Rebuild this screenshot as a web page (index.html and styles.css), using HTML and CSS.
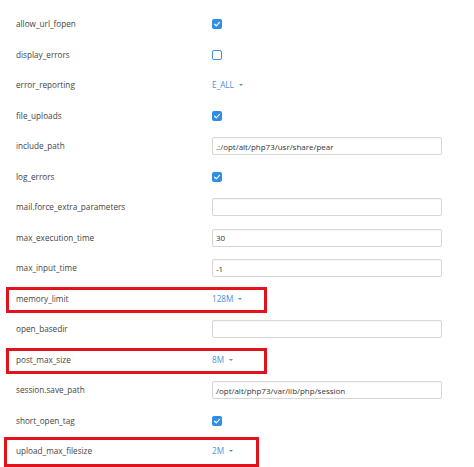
FILE: index.html
```html
<!DOCTYPE html>
<html>
<head>
<meta charset="utf-8">
<link rel="stylesheet" href="styles.css">
</head>
<body>
<div class="list">
  <div class="row"><span class="label">allow_url_fopen</span><span class="cb on"><svg viewBox="0 0 10 10"><path d="M2.6 5.2 L4.3 6.8 L7.5 3.4"/></svg></span></div>
  <div class="row"><span class="label">display_errors</span><span class="cb off"></span></div>
  <div class="row"><span class="label">error_reporting</span><span class="dd">E_ALL<i class="caret"></i></span></div>
  <div class="row"><span class="label">file_uploads</span><span class="cb on"><svg viewBox="0 0 10 10"><path d="M2.6 5.2 L4.3 6.8 L7.5 3.4"/></svg></span></div>
  <div class="row"><span class="label">include_path</span><span class="inp">.:/opt/alt/php73/usr/share/pear</span></div>
  <div class="row"><span class="label">log_errors</span><span class="cb on"><svg viewBox="0 0 10 10"><path d="M2.6 5.2 L4.3 6.8 L7.5 3.4"/></svg></span></div>
  <div class="row"><span class="label">mail.force_extra_parameters</span><span class="inp"></span></div>
  <div class="row"><span class="label">max_execution_time</span><span class="inp">30</span></div>
  <div class="row"><span class="label">max_input_time</span><span class="inp">-1</span></div>
  <div class="row mark mark-a"><span class="label">memory_limit</span><span class="dd">128M<i class="caret"></i></span></div>
  <div class="row"><span class="label">open_basedir</span><span class="inp"></span></div>
  <div class="row mark mark-b"><span class="label">post_max_size</span><span class="dd">8M<i class="caret"></i></span></div>
  <div class="row"><span class="label">session.save_path</span><span class="inp">/opt/alt/php73/var/lib/php/session</span></div>
  <div class="row"><span class="label">short_open_tag</span><span class="cb on"><svg viewBox="0 0 10 10"><path d="M2.6 5.2 L4.3 6.8 L7.5 3.4"/></svg></span></div>
  <div class="row mark mark-c"><span class="label">upload_max_filesize</span><span class="dd">2M<i class="caret"></i></span></div>
</div>
</body>
</html>
```
FILE: styles.css
```css
html, body {
  margin: 0;
  padding: 0;
  background: #ffffff;
}
body {
  font-family: "Open Sans", "Noto Sans", sans-serif;
  font-size: 8.2px;
  color: #444444;
  overflow: hidden;
}
.list {
  padding-top: 9px;
  display: flex;
  flex-direction: column;
}
.row {
  position: relative;
  height: 30.5px;
  display: grid;
  grid-template-columns: 196px 230px;
  align-items: center;
  padding-left: 16px;
}
.label {
  line-height: 12px;
}
.cb {
  width: 10px;
  height: 10px;
  box-sizing: border-box;
  border-radius: 2px;
  display: flex;
}
.cb.on {
  background: #2f8ee5;
}
.cb.off {
  border: 1.5px solid #3b8fe0;
  background: #fff;
}
.cb svg {
  width: 10px;
  height: 10px;
}
.cb svg path {
  fill: none;
  stroke: #fff;
  stroke-width: 1.2;
  stroke-linecap: round;
  stroke-linejoin: round;
}
.dd {
  color: #4a93dc;
  display: flex;
  align-items: center;
  line-height: 12px;
}
.caret {
  display: inline-block;
  margin-left: 5px;
  width: 0;
  height: 0;
  border-left: 2.5px solid transparent;
  border-right: 2.5px solid transparent;
  border-top: 2.5px solid #4a93dc;
}
.inp {
  height: 18px;
  box-sizing: border-box;
  border: 1px solid #d6d6d6;
  border-radius: 2px;
  padding-left: 3px;
  display: flex;
  align-items: center;
  color: #333;
  font-size: 8px;
  box-shadow: inset 0 1px 1px rgba(0,0,0,0.04);
}
.mark::after {
  content: "";
  position: absolute;
  border: 3px solid #e0121c;
  pointer-events: none;
}
.mark-a::after, .mark-b::after {
  left: 6px;
  width: 255px;
  top: 3.5px;
  height: 20px;
}
.mark-c::after {
  left: 4px;
  width: 249px;
  top: 1px;
  height: 24px;
}
```
